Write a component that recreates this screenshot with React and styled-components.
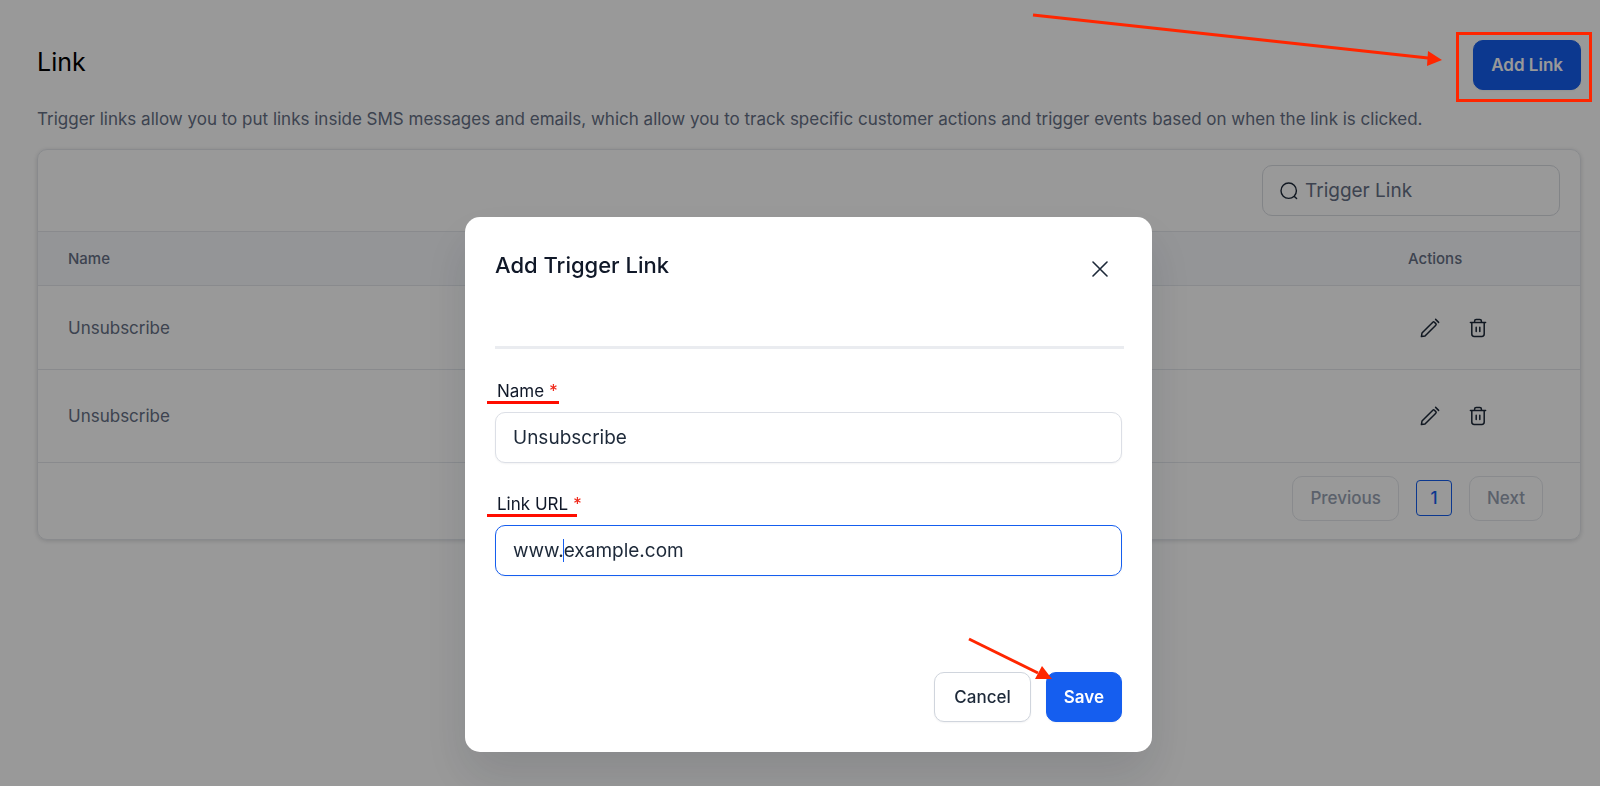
import React, { useState } from 'react';
import styled, { createGlobalStyle, css } from 'styled-components';

const GlobalStyle = createGlobalStyle`
  * {
    box-sizing: border-box;
  }

  body {
    margin: 0;
    background: #fff;
    color: #101828;
    font-family: Inter, 'Liberation Sans', sans-serif;
  }

  button,
  input {
    font-family: inherit;
  }
`;

const Page = styled.main`
  min-height: 100vh;
  padding: 40px 19px 40px 37px;
`;

const Header = styled.header`
  display: flex;
  align-items: flex-start;
  justify-content: space-between;
`;

const Title = styled.h1`
  margin: 0;
  padding-top: 6px;
  font-size: 25px;
  line-height: 32px;
  font-weight: 400;
  color: #000;
`;

const Description = styled.p`
  margin: 16px 0;
  font-size: 17px;
  line-height: 27px;
  color: #667085;
`;

const Button = styled.button`
  height: 50px;
  padding: 0 19px;
  border-radius: 10px;
  border: 1px solid #d0d5dd;
  background: #fff;
  color: #1d2939;
  font-size: 17px;
  font-weight: 500;
  cursor: pointer;
  box-shadow: 0 1px 2px rgba(16, 24, 40, 0.05);

  ${({ $primary }) =>
    $primary &&
    css`
      padding: 0 17px;
      border-color: #155eef;
      background: #155eef;
      color: #fff;
      font-weight: 600;
    `}
`;

const Card = styled.section`
  border: 1px solid #e4e7ec;
  border-radius: 10px;
  box-shadow: 0 1px 4px rgba(16, 24, 40, 0.16);
`;

const CardToolbar = styled.div`
  display: flex;
  justify-content: flex-end;
  padding: 15px 20px 15px 21px;
`;

const SearchBox = styled.label`
  display: flex;
  align-items: center;
  gap: 7px;
  width: 298px;
  height: 51px;
  padding: 0 17px;
  border: 1px solid #d9dce2;
  border-radius: 10px;
  color: #1d2939;
`;

const SearchInput = styled.input`
  flex: 1;
  min-width: 0;
  padding: 0;
  border: none;
  outline: none;
  background: none;
  font-size: 19px;
  color: #344054;

  &::placeholder {
    color: #667085;
    opacity: 1;
  }
`;

const Table = styled.table`
  width: 100%;
  border-collapse: collapse;
  color: #667085;
`;

const HeadCell = styled.th`
  height: 54px;
  padding: 0 30px;
  border-top: 1px solid #e4e7ec;
  background: #f7f9fc;
  font-size: 15px;
  font-weight: 500;
  text-align: left;
  width: ${({ $width }) => $width || 'auto'};
`;

const Cell = styled.td`
  height: 84px;
  padding: 0 30px;
  border-top: 1px solid #e4e7ec;
  font-size: 17px;

  tr:last-child > & {
    height: 92px;
  }
`;

const Actions = styled.div`
  display: flex;
  gap: 4px;
`;

const IconButton = styled.button`
  display: flex;
  align-items: center;
  justify-content: center;
  width: 44px;
  height: 44px;
  padding: 0;
  border: none;
  background: none;
  color: #1d2939;
  cursor: pointer;
`;

const Pagination = styled.nav`
  display: flex;
  align-items: center;
  justify-content: flex-end;
  gap: 17px;
  padding: 13px 37px 18px;
  border-top: 1px solid #e4e7ec;
`;

const PageButton = styled.button`
  height: 45px;
  padding: 0 17px;
  border: 1px solid #e4e7ec;
  border-radius: 10px;
  background: none;
  color: #98a2b3;
  font-size: 17px;
  font-weight: 500;
`;

const PageNumber = styled.button`
  width: 36px;
  height: 36px;
  padding: 0;
  border: 1px solid #155eef;
  border-radius: 4px;
  background: none;
  color: #155eef;
  font-size: 17px;
  font-weight: 500;
`;

const Overlay = styled.div`
  position: fixed;
  inset: 0;
  z-index: 10;
  display: flex;
  align-items: flex-start;
  justify-content: center;
  padding: 217px 0 0 17px;
  background: rgba(0, 0, 0, 0.4);
`;

const Modal = styled.form`
  width: 687px;
  max-width: 100%;
  padding: 30px;
  border-radius: 15px;
  background: #fff;
  box-shadow: 0 24px 48px rgba(16, 24, 40, 0.12);
`;

const ModalHeader = styled.div`
  display: flex;
  justify-content: space-between;
  height: 99px;
`;

const ModalTitle = styled.h2`
  margin: 0;
  padding-top: 4px;
  font-size: 22px;
  line-height: 28px;
  font-weight: 500;
`;

const Divider = styled.hr`
  height: 3px;
  margin: 0 -2px 28px 0;
  border: none;
  background: #eaecf0;
`;

const Field = styled.div`
  margin-bottom: 27px;
`;

const Label = styled.label`
  position: relative;
  display: block;
  width: fit-content;
  padding-left: 2px;
  margin-bottom: 7px;
  font-size: 17px;
  line-height: 28px;
`;

const Required = styled.span`
  color: #f02d1f;
  font-weight: 500;
`;

const InputWrap = styled.div`
  position: relative;
`;

const Input = styled.input`
  display: block;
  width: 100%;
  height: 51px;
  padding: 0 17px;
  border: 1px solid ${({ $active }) => ($active ? '#155eef' : '#dcdfe6')};
  border-radius: 10px;
  outline: none;
  box-shadow: 0 1px 2px rgba(16, 24, 40, 0.05);
  font-size: 19px;
  color: #1d2939;
`;

const Caret = styled.span`
  position: absolute;
  left: 68px;
  top: 14px;
  width: 1px;
  height: 23px;
  background: #155eef;
`;

const ModalFooter = styled.div`
  display: flex;
  justify-content: flex-end;
  gap: 15px;
  padding-top: 69px;
`;

/* Tutorial marks, each one anchored to the control it points at */
const Marked = styled.div`
  position: relative;
`;

const HighlightBox = styled.div`
  position: absolute;
  z-index: 20;
  inset: -8px -11px -12px -17px;
  border: 3px solid #ff2600;
  pointer-events: none;
`;

const Underline = styled.span`
  position: absolute;
  left: -8px;
  bottom: 1px;
  width: ${({ $width }) => $width};
  height: 3px;
  background: #ff0d00;
`;

const ArrowSvg = styled.svg`
  position: absolute;
  z-index: 20;
  right: ${({ $right }) => $right};
  top: ${({ $top }) => $top};
  pointer-events: none;
`;

const SearchIcon = () => (
  <svg width="18" height="18" viewBox="0 0 18 18" fill="none" stroke="currentColor" strokeWidth="1.4" strokeLinecap="round">
    <circle cx="8.7" cy="8.7" r="7.7" />
    <path d="M14.4 14.4 16.6 16.6" />
  </svg>
);

const PencilIcon = () => (
  <svg width="20" height="20" viewBox="0 0 20 20" fill="none" stroke="currentColor" strokeWidth="1.5" strokeLinecap="round" strokeLinejoin="round">
    <path d="M1.4 18.6 2 15 12.8 4.2Q13.6 3.4 14.4 4.2L15.8 5.6Q16.6 6.4 15.8 7.2L5 18Z" />
    <path d="M15.6 1.4 18.6 4.4" />
  </svg>
);

const TrashIcon = () => (
  <svg width="20" height="20" viewBox="0 0 20 20" fill="none" stroke="currentColor" strokeWidth="1.5" strokeLinecap="round" strokeLinejoin="round">
    <path d="M2.4 4.6H17.6M6.6 4.4V3Q6.6 1.4 8.2 1.4H11.8Q13.4 1.4 13.4 3V4.4" />
    <path d="M3.8 4.8V16Q3.8 18.4 6.2 18.4H13.8Q16.2 18.4 16.2 16V4.8M8.2 9.2V13.6M11.8 9.2V13.6" />
  </svg>
);

const CloseIcon = () => (
  <svg width="16" height="16" viewBox="0 0 16 16" fill="none" stroke="currentColor" strokeWidth="1.6" strokeLinecap="round">
    <path d="M1 1 15 15M15 1 1 15" />
  </svg>
);

const links = [
  { id: 1, name: 'Unsubscribe' },
  { id: 2, name: 'Unsubscribe' },
];

const LinksTable = () => (
  <Table>
    <thead>
      <tr>
        <HeadCell>Name</HeadCell>
        <HeadCell $width="202px">Actions</HeadCell>
      </tr>
    </thead>
    <tbody>
      {links.map((link) => (
        <tr key={link.id}>
          <Cell>{link.name}</Cell>
          <Cell>
            <Actions>
              <IconButton aria-label="Edit">
                <PencilIcon />
              </IconButton>
              <IconButton aria-label="Delete">
                <TrashIcon />
              </IconButton>
            </Actions>
          </Cell>
        </tr>
      ))}
    </tbody>
  </Table>
);

const AddLinkModal = ({ onClose }) => {
  const [name, setName] = useState('Unsubscribe');
  const [url, setUrl] = useState('www.example.com');

  return (
    <Overlay>
      <Modal role="dialog" aria-labelledby="modal-title" onSubmit={(e) => e.preventDefault()}>
        <ModalHeader>
          <ModalTitle id="modal-title">Add Trigger Link</ModalTitle>
          <IconButton type="button" aria-label="Close" onClick={onClose}>
            <CloseIcon />
          </IconButton>
        </ModalHeader>
        <Divider />

        <Field>
          <Label htmlFor="name">
            Name <Required>*</Required>
            <Underline $width="72px" />
          </Label>
          <Input id="name" type="text" value={name} onChange={(e) => setName(e.target.value)} />
        </Field>

        <Field>
          <Label htmlFor="url">
            Link URL <Required>*</Required>
            <Underline $width="90px" />
          </Label>
          <InputWrap>
            <Input id="url" type="text" $active value={url} onChange={(e) => setUrl(e.target.value)} />
            <Caret />
          </InputWrap>
        </Field>

        <ModalFooter>
          <Button type="button" onClick={onClose}>Cancel</Button>
          <Marked>
            <Button type="submit" $primary>Save</Button>
            <ArrowSvg $right="70px" $top="-36px" width="86" height="48" viewBox="0 0 86 48">
              <path d="M3 3 72 37" stroke="#ff2600" strokeWidth="3" />
              <path d="M76 30 86 43 69 43Z" fill="#ff2600" />
            </ArrowSvg>
          </Marked>
        </ModalFooter>
      </Modal>
    </Overlay>
  );
};

const App = () => {
  const [open, setOpen] = useState(true);

  return (
    <>
      <GlobalStyle />
      <Page>
        <Header>
          <Title>Link</Title>
          <Marked>
            <Button $primary onClick={() => setOpen(true)}>Add Link</Button>
            <HighlightBox />
            <ArrowSvg $right="139px" $top="-28px" width="412" height="58" viewBox="0 0 412 58">
              <path d="M3 3 398 46" stroke="#ff2600" strokeWidth="3" />
              <path d="M398 39 412 48 397 54Z" fill="#ff2600" />
            </ArrowSvg>
          </Marked>
        </Header>
        <Description>
          Trigger links allow you to put links inside SMS messages and emails, which allow you to track specific customer
          actions and trigger events based on when the link is clicked.
        </Description>

        <Card>
          <CardToolbar>
            <SearchBox>
              <SearchIcon />
              <SearchInput type="text" placeholder="Trigger Link" aria-label="Search trigger links" />
            </SearchBox>
          </CardToolbar>
          <LinksTable />
          <Pagination>
            <PageButton disabled>Previous</PageButton>
            <PageNumber>1</PageNumber>
            <PageButton disabled>Next</PageButton>
          </Pagination>
        </Card>
      </Page>
      {open && <AddLinkModal onClose={() => setOpen(false)} />}
    </>
  );
};

export default App;
